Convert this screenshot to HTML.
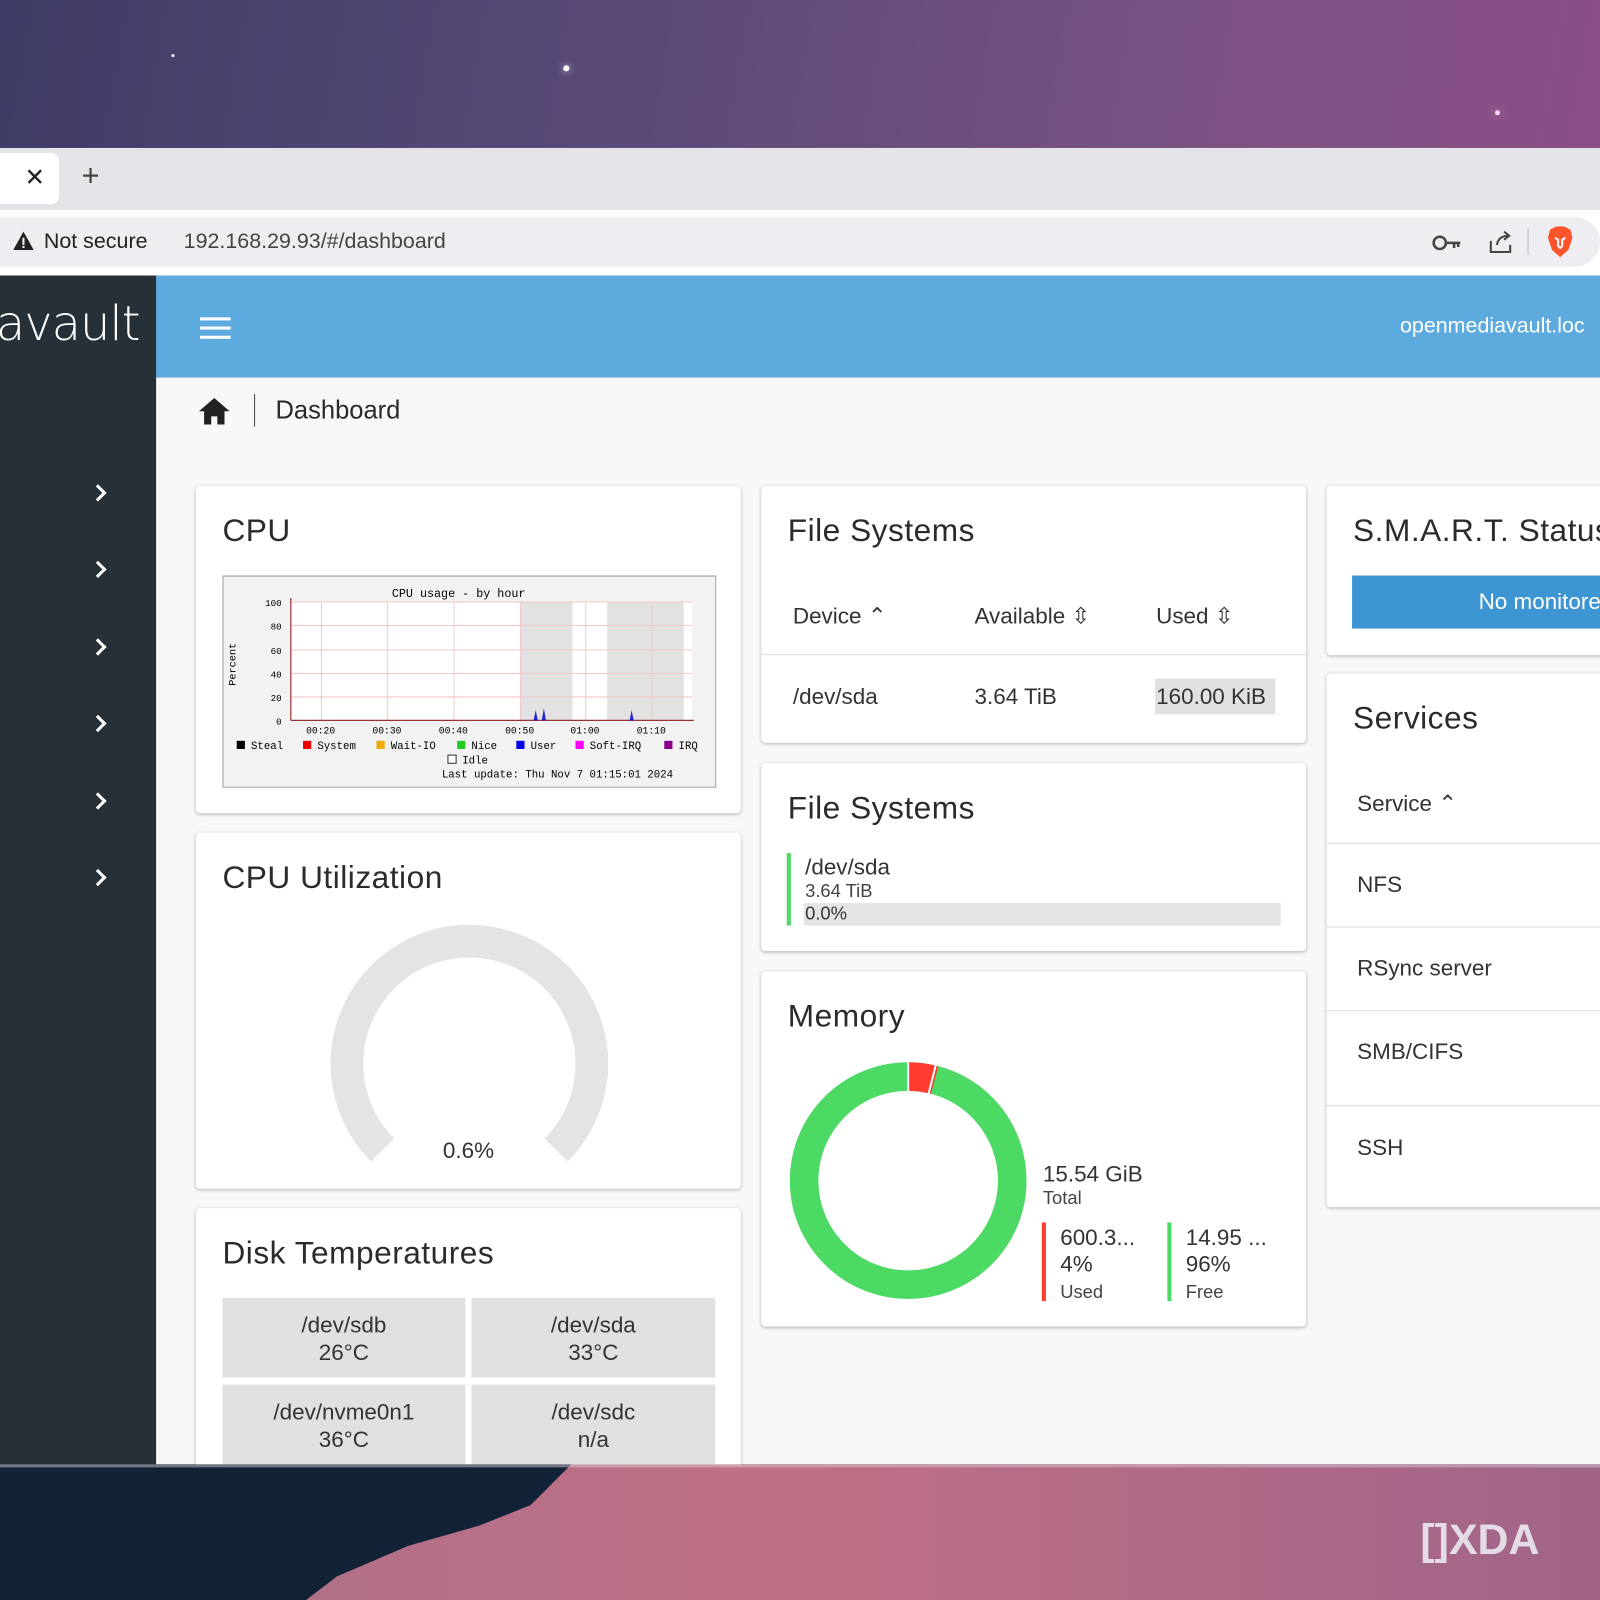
<!DOCTYPE html>
<html><head><meta charset="utf-8"><style>
*{box-sizing:border-box;margin:0;padding:0}
html,body{width:1600px;height:1600px;overflow:hidden;background:#5a4a70}
#w{position:absolute;left:0;top:0;width:1568px;height:1568px;transform:scale(1.020408);transform-origin:0 0;font-family:"Liberation Sans",sans-serif;color:#2a2a2a}
.a{position:absolute}
.card{position:absolute;background:#fff;border-radius:4px;box-shadow:0 1px 3px rgba(0,0,0,.25)}
.t{position:absolute;font-size:31px;color:#2b2b2b;letter-spacing:.5px}
.f{font-size:22px;color:#333}
.line{position:absolute;height:1px;background:#ddd}
.chev{position:absolute;left:90px;width:12px;height:12px;border-right:3px solid #fff;border-bottom:3px solid #fff;transform:rotate(-45deg)}
.cell{position:absolute;background:#e0e0e0;text-align:center;font-size:22px;line-height:27px;color:#333;padding-top:13px}
</style></head><body><div id="w">
<div class="a" style="left:0;top:0;width:1568px;height:145px;background:linear-gradient(100deg,#3e3c66 0%,#5a4a78 40%,#7a5282 75%,#8a4f86 100%)"></div>
<div class="a" style="left:552px;top:64px;width:6px;height:6px;border-radius:50%;background:#fff;box-shadow:0 0 8px #cce"></div>
<div class="a" style="left:168px;top:53px;width:3px;height:3px;border-radius:50%;background:#fff"></div>
<div class="a" style="left:1465px;top:108px;width:5px;height:5px;border-radius:50%;background:#fde;box-shadow:0 0 10px #f8c"></div>
<div class="a" style="left:0;top:145px;width:1568px;height:60px;background:#e3e3e8"></div>
<div class="a" style="left:0;top:150px;width:58px;height:50px;background:#fff;border-radius:0 8px 8px 0"></div>
<div class="a" style="left:24px;top:160px;font-size:24px;color:#222">✕</div>
<div class="a" style="left:80px;top:156px;font-size:30px;color:#444">+</div>
<div class="a" style="left:0;top:205px;width:1568px;height:65px;background:#fff"></div>
<div class="a" style="left:0;top:213px;width:1568px;height:48px;background:#eeeef2;border-radius:0 24px 24px 0"></div>
<svg class="a" style="left:12px;top:226px" width="22" height="20"><path d="M11 1 L21 19 L1 19Z" fill="#222"/><rect x="10" y="7" width="2" height="7" fill="#fff"/><rect x="10" y="15" width="2" height="2" fill="#fff"/></svg>
<div class="a" style="left:43px;top:225px;font-size:21px;color:#222">Not secure</div>
<div class="a" style="left:180px;top:225px;font-size:21px;color:#444">192.168.29.93/#/dashboard</div>
<svg class="a" style="left:1403px;top:228px" width="30" height="20"><circle cx="8" cy="10" r="6" fill="none" stroke="#444" stroke-width="2.5"/><path d="M14 10H28M22 10V15M26 10V14" stroke="#444" stroke-width="2.5" fill="none"/></svg>
<svg class="a" style="left:1458px;top:224px" width="26" height="26"><path d="M3 12V23H22V16M9 16C10 9 15 7 21 7M16 3L21 7L16 11" stroke="#444" stroke-width="2" fill="none"/></svg>
<div class="a" style="left:1497px;top:224px;width:1px;height:26px;background:#bbb"></div>
<svg class="a" style="left:1515px;top:221px" width="28" height="32"><path d="M4 4L10 1H18L24 4L26 12L22 24L14 31L6 24L2 12Z" fill="#fb542b"/><path d="M9 12L12 14V20L14 22L16 20V14L19 12" stroke="#fff" stroke-width="2" fill="none"/></svg>
<div class="a" style="left:0;top:270px;width:153px;height:1165px;background:#263036"></div>
<div class="a" style="left:-4px;top:290px;font-size:47px;color:#fff;font-family:'DejaVu Sans',sans-serif;font-weight:200;letter-spacing:-1px">avault</div>
<div class="chev" style="top:477px"></div><div class="chev" style="top:552px"></div><div class="chev" style="top:628px"></div><div class="chev" style="top:703px"></div><div class="chev" style="top:779px"></div><div class="chev" style="top:854px"></div>
<div class="a" style="left:153px;top:270px;width:1415px;height:100px;background:#5dabde"></div>
<div class="a" style="left:196px;top:311px;width:30px;height:3px;background:#fff;box-shadow:0 9px 0 #fff,0 18px 0 #fff"></div>
<div class="a" style="left:1372px;top:308px;font-size:21px;color:#fff;white-space:nowrap">openmediavault.loc</div>
<div class="a" style="left:153px;top:370px;width:1415px;height:1065px;background:#f8f8f8"></div>
<svg class="a" style="left:194px;top:388px" width="33" height="30"><path d="M16 2L1 15H6V28H13V20H19V28H26V15H31Z" fill="#222"/></svg>
<div class="a" style="left:249px;top:386px;width:1px;height:32px;background:#444"></div>
<div class="a" style="left:270px;top:388px;font-size:25px;color:#2a2a2a">Dashboard</div>

<div class="card" style="left:192px;top:476px;width:534px;height:321px"></div>
<div class="t" style="left:218px;top:502px">CPU</div>
<svg class="a" style="left:218px;top:564px" width="484" height="208" font-family="Liberation Mono,monospace">
<rect x="0.5" y="0.5" width="483" height="207" fill="#f2f2f2" stroke="#999"/>
<rect x="67" y="26" width="393" height="116" fill="#fff"/>
<rect x="292" y="26" width="51" height="116" fill="#e2e2e2"/><rect x="377" y="26" width="75" height="116" fill="#e2e2e2"/>
<g stroke="#f2c8c8" stroke-width="1">
<path d="M67 26H460M67 49H460M67 73H460M67 96H460M67 119H460"/>
<path d="M97 26V142M162 26V142M227 26V142M292 26V142M356 26V142M421 26V142"/>
</g>
<path d="M67 142H462M67 142V22" stroke="#933" stroke-width="1.2"/>
<path d="M305 142L307 132L309 142M313 142L315 130L317 142M399 142L401 132L403 142" fill="#22c"/>
<text x="166" y="21" font-size="11.5">CPU usage - by hour</text>
<g font-size="9" text-anchor="end"><text x="58" y="30">100</text><text x="58" y="53">80</text><text x="58" y="77">60</text><text x="58" y="100">40</text><text x="58" y="123">20</text><text x="58" y="146">0</text></g>
<text transform="translate(13,108) rotate(-90)" font-size="10">Percent</text>
<g font-size="9.5"><text x="82" y="155">00:20</text><text x="147" y="155">00:30</text><text x="212" y="155">00:40</text><text x="277" y="155">00:50</text><text x="341" y="155">01:00</text><text x="406" y="155">01:10</text></g>
<g font-size="10.5"><rect x="14" y="162" width="8" height="8"/><text x="28" y="170">Steal</text>
<rect x="79" y="162" width="8" height="8" fill="#e00"/><text x="93" y="170">System</text>
<rect x="151" y="162" width="8" height="8" fill="#ea0"/><text x="165" y="170">Wait-IO</text>
<rect x="230" y="162" width="8" height="8" fill="#2c2"/><text x="244" y="170">Nice</text>
<rect x="288" y="162" width="8" height="8" fill="#00e"/><text x="302" y="170">User</text>
<rect x="346" y="162" width="8" height="8" fill="#f0f"/><text x="360" y="170">Soft-IRQ</text>
<rect x="433" y="162" width="8" height="8" fill="#808"/><text x="447" y="170">IRQ</text>
<rect x="221" y="176" width="8" height="8" fill="#fff" stroke="#333"/><text x="235" y="184">Idle</text>
<text x="215" y="198">Last update: Thu Nov  7 01:15:01 2024</text></g>
</svg>

<div class="card" style="left:192px;top:816px;width:534px;height:349px"></div>
<div class="t" style="left:218px;top:842px">CPU Utilization</div>
<svg class="a" style="left:320px;top:904px" width="280" height="240"><path d="M55 223 A120 120 0 1 1 225 223" fill="none" stroke="#e4e4e4" stroke-width="32"/></svg>
<div class="a" style="left:434px;top:1115px" ><span class="f">0.6%</span></div>

<div class="card" style="left:192px;top:1184px;width:534px;height:260px"></div>
<div class="t" style="left:218px;top:1210px">Disk Temperatures</div>
<div class="cell" style="left:218px;top:1272px;width:238px;height:78px">/dev/sdb<br>26°C</div>
<div class="cell" style="left:462px;top:1272px;width:239px;height:78px">/dev/sda<br>33°C</div>
<div class="cell" style="left:218px;top:1357px;width:238px;height:78px">/dev/nvme0n1<br>36°C</div>
<div class="cell" style="left:462px;top:1357px;width:239px;height:78px">/dev/sdc<br>n/a</div>

<div class="card" style="left:746px;top:476px;width:534px;height:252px"></div>
<div class="t" style="left:772px;top:502px">File Systems</div>
<div class="a f" style="left:777px;top:591px">Device ⌃</div>
<div class="a f" style="left:955px;top:591px">Available ⇳</div>
<div class="a f" style="left:1133px;top:591px">Used ⇳</div>
<div class="line" style="left:746px;top:641px;width:534px"></div>
<div class="a f" style="left:777px;top:670px">/dev/sda</div>
<div class="a f" style="left:955px;top:670px">3.64 TiB</div>
<div class="a" style="left:1132px;top:665px;width:118px;height:35px;background:#e0e0e0"></div>
<div class="a f" style="left:1133px;top:670px">160.00 KiB</div>

<div class="card" style="left:746px;top:748px;width:534px;height:184px"></div>
<div class="t" style="left:772px;top:774px">File Systems</div>
<div class="a" style="left:771px;top:836px;width:4px;height:71px;background:#4cd964"></div>
<div class="a f" style="left:789px;top:837px">/dev/sda</div>
<div class="a" style="left:789px;top:863px;font-size:18px;color:#444">3.64 TiB</div>
<div class="a" style="left:788px;top:885px;width:467px;height:22px;background:#e4e4e4"></div>
<div class="a" style="left:789px;top:885px;font-size:18px;color:#333">0.0%</div>

<div class="card" style="left:746px;top:952px;width:534px;height:348px"></div>
<div class="t" style="left:772px;top:978px">Memory</div>
<svg class="a" style="left:770px;top:1037px" width="240" height="240">
<circle cx="120" cy="120" r="102" fill="none" stroke="#4cd964" stroke-width="28"/>
<path d="M120 18 A102 102 0 0 1 146 21.4" fill="none" stroke="#ff3b30" stroke-width="28"/>
<path d="M120 4V33M147 7L140 35" stroke="#fff" stroke-width="2"/>
</svg>
<div class="a f" style="left:1022px;top:1138px">15.54 GiB</div>
<div class="a" style="left:1022px;top:1164px;font-size:18px;color:#444">Total</div>
<div class="a" style="left:1021px;top:1198px;width:4px;height:77px;background:#ff3b30"></div>
<div class="a f" style="left:1039px;top:1200px;line-height:26px">600.3...<br>4%<br><span style="font-size:18px;color:#444">Used</span></div>
<div class="a" style="left:1144px;top:1198px;width:4px;height:77px;background:#4cd964"></div>
<div class="a f" style="left:1162px;top:1200px;line-height:26px">14.95 ...<br>96%<br><span style="font-size:18px;color:#444">Free</span></div>

<div class="card" style="left:1300px;top:476px;width:290px;height:166px"></div>
<div class="t" style="left:1326px;top:502px;white-space:nowrap">S.M.A.R.T. Status</div>
<div class="a" style="left:1325px;top:564px;width:260px;height:52px;background:#3d96d3"></div>
<div class="a" style="left:1449px;top:577px;font-size:22px;color:#fff;white-space:nowrap">No monitored</div>

<div class="card" style="left:1300px;top:660px;width:290px;height:523px"></div>
<div class="t" style="left:1326px;top:686px">Services</div>
<div class="a f" style="left:1330px;top:775px">Service ⌃</div>
<div class="line" style="left:1300px;top:826px;width:268px"></div>
<div class="a f" style="left:1330px;top:854px">NFS</div>
<div class="line" style="left:1300px;top:908px;width:268px"></div>
<div class="a f" style="left:1330px;top:936px">RSync server</div>
<div class="line" style="left:1300px;top:990px;width:268px"></div>
<div class="a f" style="left:1330px;top:1018px">SMB/CIFS</div>
<div class="line" style="left:1300px;top:1083px;width:268px"></div>
<div class="a f" style="left:1330px;top:1112px">SSH</div>

<svg class="a" style="left:0;top:1435px" width="1568" height="133">
<defs><linearGradient id="g" x1="0" x2="1"><stop offset="0" stop-color="#a87088"/><stop offset=".5" stop-color="#c07086"/><stop offset="1" stop-color="#a06488"/></linearGradient></defs>
<rect width="1568" height="133" fill="url(#g)"/>
<path d="M0 0H560L520 40L470 60L400 80L330 110L300 133H0Z" fill="#122338"/>
<path d="M0 0H1568V3H0Z" fill="#d8c8d0" opacity=".5"/>
</svg>
<div class="a" style="left:1392px;top:1485px;font-size:42px;font-weight:bold;color:#e4dce4;letter-spacing:0">[]XDA</div>
</div></body></html>
